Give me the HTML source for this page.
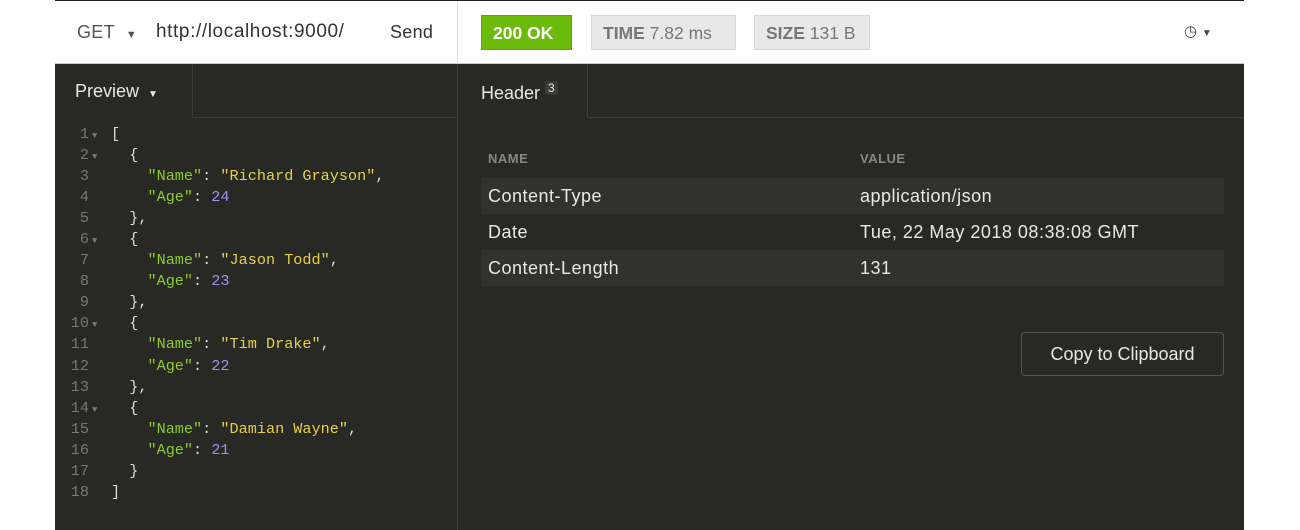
<!DOCTYPE html>
<html><head><style>
*{margin:0;padding:0;box-sizing:border-box}
body{width:1300px;height:530px;background:#fff;position:relative;overflow:hidden;font-family:"Liberation Sans",sans-serif}
.app{position:absolute;left:55px;top:0;width:1189px;height:530px;background:#282925}
.top{position:absolute;left:0;top:0;width:1189px;height:64px;background:#fff;border-bottom:1px solid #ccc;border-top:1px solid #222}
.t{position:absolute;font-size:18px;color:#333;top:21px;letter-spacing:0.3px;white-space:nowrap}
.badge{position:absolute;top:14px;height:35px;font-size:17.5px;line-height:34px;padding:0 11px;white-space:nowrap;overflow:hidden}
.code{position:absolute;left:0;top:124px;font-family:"Liberation Mono",monospace;font-size:15.2px;line-height:21.05px;color:#ddd;white-space:pre}
.ln{display:inline-block;width:34px;text-align:right;color:#777}
.ar{display:inline-block;width:22px;color:#777;font-size:9px;line-height:0;padding-left:3px}
.k{color:#8ccc2e}.s{color:#e6d04a}.n{color:#a58cf0}
.row{position:absolute;left:426px;width:743px;height:36px;font-size:18px;color:#e8e8e8;line-height:36px;letter-spacing:0.5px}
.row span{position:absolute;white-space:nowrap}
</style></head><body>
<div class="app">
 <div class="top">
  <div class="t" style="left:22px;color:#555">GET <span style="font-size:11px;margin-left:6px">▼</span></div>
  <div class="t" style="left:101px;font-size:19px;letter-spacing:0.6px;top:20px">http://localhost:9000/</div>
  <div class="t" style="left:335px">Send</div>
  <div style="position:absolute;left:402px;top:0;width:1px;height:64px;background:#ddd"></div>
  <div class="badge" style="left:426px;width:91px;background:#6cbb0a;color:#fff;font-weight:bold;border:1px solid #5fa808">200 OK</div>
  <div class="badge" style="left:536px;width:145px;background:#e8e8e8;color:#777;border:1px solid #d8d8d8"><b>TIME</b> 7.82 ms</div>
  <div class="badge" style="left:699px;width:116px;background:#e8e8e8;color:#777;border:1px solid #d8d8d8"><b>SIZE</b> 131 B</div>
  <div class="t" style="left:1129px;top:21px;font-size:15px;color:#444">◷ <span style="font-size:10px">▼</span></div>
 </div>
 <div style="position:absolute;left:20px;top:81px;font-size:18px;color:#e8e8e8">Preview <span style="font-size:10px;margin-left:4px">▼</span></div>
 <div style="position:absolute;left:137px;top:64px;width:265px;height:54px;border-left:1px solid #3c3d39;border-bottom:1px solid #3c3d39"></div>
 <div style="position:absolute;left:402px;top:64px;width:1px;height:466px;background:#3c3d39"></div>
 <div style="position:absolute;left:426px;top:81px;font-size:18px;color:#e8e8e8">Header <sup style="font-size:12px;background:#3a3b37;padding:0 3px;border-radius:2px">3</sup></div>
 <div style="position:absolute;left:532px;top:64px;width:657px;height:54px;border-left:1px solid #3c3d39;border-bottom:1px solid #3c3d39"></div>
 <div class="code"><span class="ln">1</span><span class="ar">▼</span>[
<span class="ln">2</span><span class="ar">▼</span>  {
<span class="ln">3</span><span class="ar"></span>    <span class="k">"Name"</span>: <span class="s">"Richard Grayson"</span>,
<span class="ln">4</span><span class="ar"></span>    <span class="k">"Age"</span>: <span class="n">24</span>
<span class="ln">5</span><span class="ar"></span>  },
<span class="ln">6</span><span class="ar">▼</span>  {
<span class="ln">7</span><span class="ar"></span>    <span class="k">"Name"</span>: <span class="s">"Jason Todd"</span>,
<span class="ln">8</span><span class="ar"></span>    <span class="k">"Age"</span>: <span class="n">23</span>
<span class="ln">9</span><span class="ar"></span>  },
<span class="ln">10</span><span class="ar">▼</span>  {
<span class="ln">11</span><span class="ar"></span>    <span class="k">"Name"</span>: <span class="s">"Tim Drake"</span>,
<span class="ln">12</span><span class="ar"></span>    <span class="k">"Age"</span>: <span class="n">22</span>
<span class="ln">13</span><span class="ar"></span>  },
<span class="ln">14</span><span class="ar">▼</span>  {
<span class="ln">15</span><span class="ar"></span>    <span class="k">"Name"</span>: <span class="s">"Damian Wayne"</span>,
<span class="ln">16</span><span class="ar"></span>    <span class="k">"Age"</span>: <span class="n">21</span>
<span class="ln">17</span><span class="ar"></span>  }
<span class="ln">18</span><span class="ar"></span>]</div>
 <div style="position:absolute;left:433px;top:151px;font-size:13px;font-weight:bold;color:#888;letter-spacing:0.5px">NAME</div>
 <div style="position:absolute;left:805px;top:151px;font-size:13px;font-weight:bold;color:#888;letter-spacing:0.5px">VALUE</div>
 <div class="row" style="top:178px;background:#31322e"><span style="left:7px">Content-Type</span><span style="left:379px">application/json</span></div>
 <div class="row" style="top:214px"><span style="left:7px">Date</span><span style="left:379px">Tue, 22 May 2018 08:38:08 GMT</span></div>
 <div class="row" style="top:250px;background:#31322e"><span style="left:7px">Content-Length</span><span style="left:379px">131</span></div>
 <div style="position:absolute;left:966px;top:332px;width:203px;height:44px;border:1px solid #555;border-radius:4px;color:#e8e8e8;font-size:18px;text-align:center;line-height:42px">Copy to Clipboard</div>
</div>
</body></html>
